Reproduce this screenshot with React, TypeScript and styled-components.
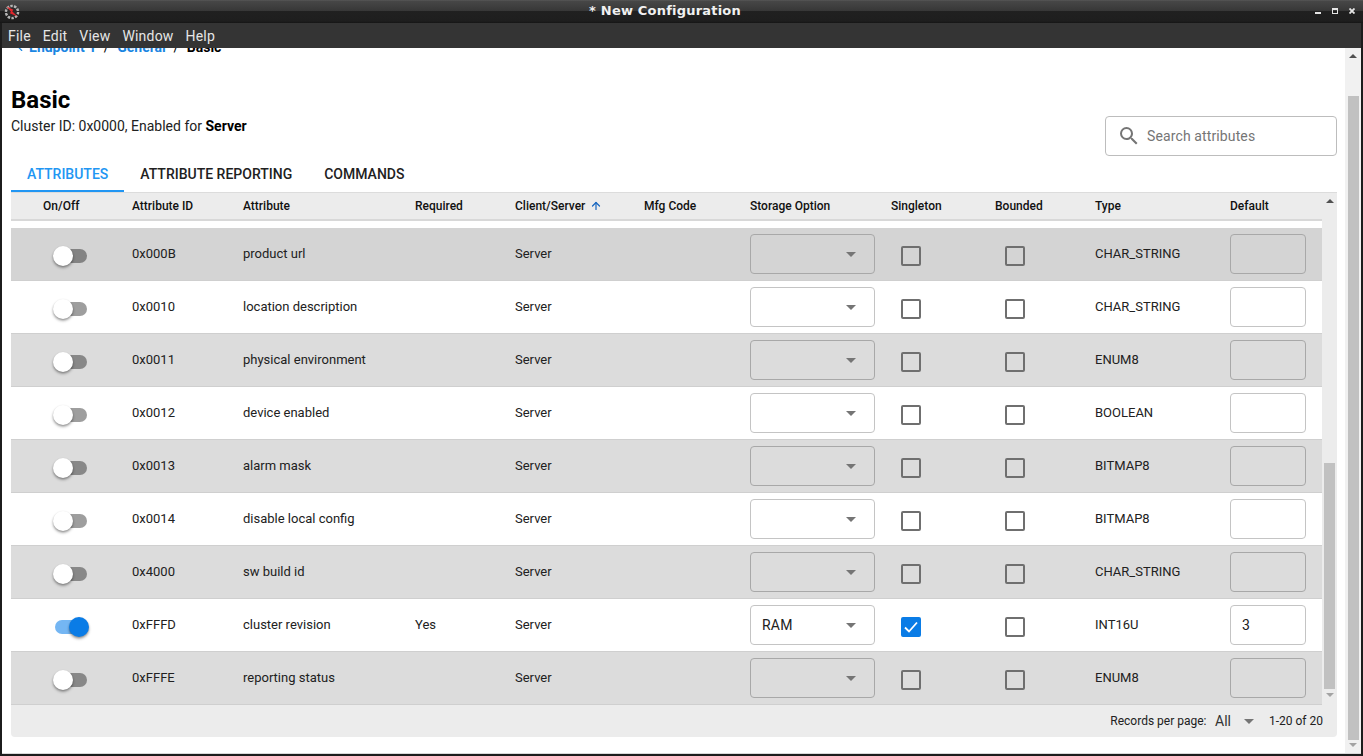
import React from "react";
import styled, { createGlobalStyle } from "styled-components";
import { ArrowUp, ChevronLeft } from "lucide-react";

const GlobalStyle = createGlobalStyle`
  html, body { margin: 0; height: 100%; overflow: hidden; background: #1c1c1c; }
  body { font-family: Roboto, "Liberation Sans", sans-serif; color: rgba(0, 0, 0, 0.87); }
  * { box-sizing: border-box; }
`;

const COLUMNS = "121px 111px 172px 100px 129px 106px 141px 104px 100px 135px 92px";

const Window = styled.div`
  width: 1363px;
  height: 756px;
  display: flex;
  flex-direction: column;
  overflow: hidden;
`;

const TitleBar = styled.div`
  height: 23px;
  flex: none;
  display: flex;
  align-items: center;
  justify-content: space-between;
  padding: 0 8px 0 3px;
  position: relative;
  background: linear-gradient(#5c5c5c 0, #474747 1px, #373737 11px, #202020 11px, #1e1e1e 21px, #151515 23px);
`;

const TitleText = styled.div`
  position: absolute;
  left: 0;
  right: 33px;
  top: 2px;
  text-align: center;
  font: bold 13px/17px "DejaVu Sans", sans-serif;
  letter-spacing: 0.2px;
  color: #f0f0f0;
`;

const WindowButtons = styled.div`
  display: flex;
  align-items: center;
  gap: 11px;
  color: #e4e4e4;
  margin-top: -1px;
`;

const MenuBar = styled.div`
  height: 25px;
  flex: none;
  margin-left: 2px;
  margin-right: 2px;
  padding-left: 6px;
  display: flex;
  align-items: center;
  gap: 12px;
  background: #343434;
`;

const MenuItem = styled.span`
  font-size: 14px;
  line-height: 20px;
  letter-spacing: 0.2px;
  color: #e6e6e6;
`;

const Frame = styled.div`
  flex: 1;
  min-height: 0;
  display: flex;
  margin: 0 2px 2px;
  background: #fff;
  border-bottom: 1px solid #d8d8d8;
  overflow: hidden;
`;

const Main = styled.main`
  flex: 1;
  min-width: 0;
  padding: 0 8px 0 9px;
`;

const Crumbs = styled.nav`
  height: 20px;
  margin-top: -11px;
  display: flex;
  align-items: center;
  font-size: 14px;
  font-weight: 700;
  color: #000;
`;

const CrumbLink = styled.a`
  color: #1a86e2;
`;

const CrumbSep = styled.span`
  width: 21px;
  text-align: center;
  font-weight: 400;
`;

const Head = styled.header`
  height: 72px;
  margin-top: 27px;
  display: flex;
  justify-content: space-between;
  align-items: flex-end;
`;

const TitleBlock = styled.div`
  align-self: flex-start;
`;

const Title = styled.h1`
  margin: 0;
  font-size: 24px;
  line-height: 32px;
  font-weight: 700;
  color: #000;
`;

const Subtitle = styled.div`
  font-size: 14px;
  line-height: 20px;
  color: #212121;
  b { font-weight: 700; color: #000; }
`;

const Search = styled.div`
  width: 232px;
  height: 40px;
  padding-left: 11px;
  display: flex;
  align-items: center;
  gap: 6px;
  border: 1px solid #bdbdbd;
  border-radius: 4px;
  font-size: 14px;
  letter-spacing: 0.12px;
  color: #757575;
`;

const Tabs = styled.div`
  height: 36px;
  display: flex;
`;

const Tab = styled.div<{ $active?: boolean }>`
  height: 36px;
  padding: 1px 16px 0;
  display: flex;
  align-items: center;
  font-size: 14px;
  font-weight: 500;
  text-transform: uppercase;
  color: ${(p) => (p.$active ? "#2196f3" : "#212121")};
  border-bottom: 2px solid ${(p) => (p.$active ? "#2196f3" : "transparent")};
`;

const Table = styled.section`
  display: flex;
  flex-direction: column;
  border-top: 1px solid #dcdcdc;
`;

const TableBody = styled.div`
  height: 512px;
  display: flex;
  background: #ececec;
`;

const TableLeft = styled.div`
  width: 1311px;
  flex: none;
`;

const HeaderRow = styled.div`
  height: 28px;
  display: grid;
  grid-template-columns: ${COLUMNS};
  align-items: center;
  border-bottom: 2px solid #d8d8d8;
  font-size: 12px;
  font-weight: 500;
  color: #111;
`;

const HeaderCell = styled.div<{ $center?: boolean }>`
  display: flex;
  align-items: center;
  gap: 5px;
  ${(p) => p.$center && "padding-left: 32px;"}
  color: #111;
`;

const Rows = styled.div`
  background: #fff;
  height: 484px;
  overflow: hidden;
`;

const ClippedRow = styled.div`
  height: 7px;
  background: #fff;
`;

const Row = styled.div<{ $bg: string }>`
  height: 53px;
  padding-bottom: 2px;
  display: grid;
  grid-template-columns: ${COLUMNS};
  align-items: center;
  font-size: 13px;
  color: #212121;
  background: ${(p) => p.$bg};
  border-bottom: 1px solid #cfcfcf;
`;

const SwitchBox = styled.div<{ $on: boolean }>`
  position: relative;
  width: 32px;
  height: 14px;
  margin: 6px 0 0 44px;
  border-radius: 7px;
  background: ${(p) => (p.$on ? "#74b6f3" : "rgba(0, 0, 0, 0.38)")};
  &::after {
    content: "";
    position: absolute;
    top: -3px;
    left: ${(p) => (p.$on ? "14px" : "-2px")};
    width: 20px;
    height: 20px;
    border-radius: 50%;
    background: ${(p) => (p.$on ? "#0a7ce6" : "#fff")};
    box-shadow: 0 2px 3px rgba(0, 0, 0, 0.3), 0 1px 2px rgba(0, 0, 0, 0.2);
  }
`;

const Field = styled.div<{ $width: number; $disabled: boolean }>`
  width: ${(p) => p.$width}px;
  height: 40px;
  margin-top: 2px;
  padding: 0 11px;
  display: flex;
  align-items: center;
  justify-content: space-between;
  border: 1px solid ${(p) => (p.$disabled ? "#a8a8a8" : "#c4c4c4")};
  border-radius: 4px;
  background: ${(p) => (p.$disabled ? "transparent" : "#fff")};
  font-size: 14px;
  letter-spacing: 0.2px;
  color: #212121;
`;

const Caret = styled.span`
  width: 0;
  height: 0;
  margin-right: 7px;
  border-left: 5px solid transparent;
  border-right: 5px solid transparent;
  border-top: 5px solid #757575;
`;

const Check = styled.div<{ $checked?: boolean }>`
  width: 20px;
  height: 20px;
  margin: 6px 0 0 10px;
  display: flex;
  align-items: center;
  justify-content: center;
  border-radius: 2px;
  border: 2px solid ${(p) => (p.$checked ? "#0a7ce6" : "#6f6f6f")};
  background: ${(p) => (p.$checked ? "#0a7ce6" : "transparent")};
`;

const Footer = styled.div`
  height: 32px;
  padding-right: 14px;
  display: flex;
  align-items: center;
  justify-content: flex-end;
  background: #ececec;
  border-radius: 0 0 4px 4px;
  font-size: 12px;
  color: #212121;
`;

const PageSize = styled.span`
  margin-left: 8.5px;
  font-size: 14px;
  color: #333;
`;

const FooterCaret = styled(Caret)`
  margin: 1px 0 0 13px;
`;

const PageCount = styled.span`
  margin-left: 15px;
`;

const ScrollBar = styled.div<{ $outer?: boolean }>`
  flex: none;
  width: ${(p) => (p.$outer ? 16 : 15)}px;
  display: flex;
  flex-direction: column;
  align-items: center;
  background: ${(p) => (p.$outer ? "#f1f1f1" : "#ececec")};
`;

const ScrollArrow = styled.span<{ $down?: boolean }>`
  flex: none;
  width: 0;
  height: 0;
  border-left: 4px solid transparent;
  border-right: 4px solid transparent;
  ${(p) =>
    p.$down ? "border-top: 4px solid #a3a3a3;" : "border-bottom: 4px solid #505050;"}
`;

const ScrollGap = styled.div<{ $size: number }>`
  flex: none;
  height: ${(p) => p.$size}px;
`;

const Thumb = styled.div<{ $size: number; $width: number }>`
  flex: none;
  width: ${(p) => p.$width}px;
  height: ${(p) => p.$size}px;
  background: #c1c1c1;
`;

type Attr = {
  id: string;
  name: string;
  type: string;
  required?: boolean;
  on?: boolean;
  storage?: string;
  value?: string;
};

const attrs: Attr[] = [
  { id: "0x000B", name: "product url", type: "CHAR_STRING" },
  { id: "0x0010", name: "location description", type: "CHAR_STRING" },
  { id: "0x0011", name: "physical environment", type: "ENUM8" },
  { id: "0x0012", name: "device enabled", type: "BOOLEAN" },
  { id: "0x0013", name: "alarm mask", type: "BITMAP8" },
  { id: "0x0014", name: "disable local config", type: "BITMAP8" },
  { id: "0x4000", name: "sw build id", type: "CHAR_STRING" },
  { id: "0xFFFD", name: "cluster revision", type: "INT16U", required: true, on: true, storage: "RAM", value: "3" },
  { id: "0xFFFE", name: "reporting status", type: "ENUM8" },
];

const columns = [
  "Attribute ID",
  "Attribute",
  "Required",
  "Client/Server",
  "Mfg Code",
  "Storage Option",
  "Singleton",
  "Bounded",
  "Type",
  "Default",
];

const rowColor = (i: number) => {
  if (i === 0) return "#d4d4d4";
  return i % 2 === 0 ? "#dcdcdc" : "#fff";
};

const AppIcon = () => (
  <svg width="18" height="18" viewBox="0 0 18 18">
    <circle cx="9" cy="9" r="6" fill="none" stroke="#b4b4b4" strokeWidth="2.6" strokeDasharray="2.4 1.3" />
    <circle cx="9" cy="9" r="4.6" fill="#2a2a2a" />
    <path d="M3.5 3.5 L10.5 6.8 L9.2 8.2 L14.5 13.5 L6.8 10.2 L8 8.8 Z" fill="#e2262c" />
  </svg>
);

const MinimizeIcon = () => (
  <svg width="6" height="6" viewBox="0 0 6 6">
    <rect y="4" width="6" height="2" fill="currentColor" />
  </svg>
);

const MaximizeIcon = () => (
  <svg width="6" height="6" viewBox="0 0 6 6">
    <path d="M0 0H6V6H0Z M1 2V5H5V2Z" fillRule="evenodd" fill="currentColor" />
  </svg>
);

const CloseIcon = () => (
  <svg width="6" height="6" viewBox="0 0 6 6">
    <path d="M0.5 0.5L5.5 5.5M5.5 0.5L0.5 5.5" stroke="currentColor" strokeWidth="1.8" />
  </svg>
);

const SearchIcon = () => (
  <svg width="24" height="24" viewBox="0 0 24 24">
    <path
      fill="#757575"
      d="M9.5,3A6.5,6.5 0 0,1 16,9.5C16,11.11 15.41,12.59 14.44,13.73L14.71,14H15.5L20.5,19L19,20.5L14,15.5V14.71L13.73,14.44C12.59,15.41 11.11,16 9.5,16A6.5,6.5 0 0,1 3,9.5A6.5,6.5 0 0,1 9.5,3M9.5,5C7,5 5,7 5,9.5C5,12 7,14 9.5,14C12,14 14,12 14,9.5C14,7 12,5 9.5,5Z"
    />
  </svg>
);

const CheckMark = () => (
  <svg width="16" height="16" viewBox="0 0 16 16">
    <path d="M2 8.5L6 12.5L14 3.5" fill="none" stroke="#fff" strokeWidth="1.8" />
  </svg>
);

export default function App() {
  return (
    <Window>
      <GlobalStyle />
      <TitleBar>
        <AppIcon />
        <TitleText>* New Configuration</TitleText>
        <WindowButtons>
          <MinimizeIcon />
          <MaximizeIcon />
          <CloseIcon />
        </WindowButtons>
      </TitleBar>
      <MenuBar>
        {["File", "Edit", "View", "Window", "Help"].map((m) => (
          <MenuItem key={m}>{m}</MenuItem>
        ))}
      </MenuBar>
      <Frame>
        <Main>
          <Crumbs>
            <CrumbLink>
              <ChevronLeft size={14} style={{ verticalAlign: -2, margin: "0 2px 0 2px" }} />
              Endpoint 1
            </CrumbLink>
            <CrumbSep>/</CrumbSep>
            <CrumbLink>General</CrumbLink>
            <CrumbSep>/</CrumbSep>
            <span>Basic</span>
          </Crumbs>
          <Head>
            <TitleBlock>
              <Title>Basic</Title>
              <Subtitle>
                Cluster ID: 0x0000, Enabled for <b>Server</b>
              </Subtitle>
            </TitleBlock>
            <Search>
              <SearchIcon />
              Search attributes
            </Search>
          </Head>
          <Tabs>
            <Tab $active>Attributes</Tab>
            <Tab>Attribute Reporting</Tab>
            <Tab>Commands</Tab>
          </Tabs>
          <Table>
            <TableBody>
              <TableLeft>
                <HeaderRow>
                  <HeaderCell $center>On/Off</HeaderCell>
                  {columns.map((c) => (
                    <HeaderCell key={c}>
                      {c}
                      {c === "Client/Server" && <ArrowUp size={12} color="#1565c0" strokeWidth={2.4} />}
                    </HeaderCell>
                  ))}
                </HeaderRow>
                <Rows>
                  <ClippedRow />
                  {attrs.map((a, i) => {
                    const disabled = i % 2 === 0;
                    return (
                      <Row key={a.id} $bg={rowColor(i)}>
                        <SwitchBox $on={!!a.on} />
                        <div>{a.id}</div>
                        <div>{a.name}</div>
                        <div>{a.required ? "Yes" : ""}</div>
                        <div>Server</div>
                        <div />
                        <Field $width={125} $disabled={disabled}>
                          <span>{a.storage}</span>
                          <Caret />
                        </Field>
                        <Check $checked={a.on}>{a.on && <CheckMark />}</Check>
                        <Check />
                        <div>{a.type}</div>
                        <Field $width={76} $disabled={disabled}>
                          {a.value}
                        </Field>
                      </Row>
                    );
                  })}
                </Rows>
              </TableLeft>
              <ScrollBar>
                <ScrollGap $size={6} />
                <ScrollArrow />
                <ScrollGap $size={260} />
                <Thumb $size={226} $width={11} />
                <ScrollGap $size={4} />
                <ScrollArrow $down />
              </ScrollBar>
            </TableBody>
            <Footer>
              Records per page:
              <PageSize>All</PageSize>
              <FooterCaret />
              <PageCount>1-20 of 20</PageCount>
            </Footer>
          </Table>
        </Main>
        <ScrollBar $outer>
          <ScrollGap $size={6} />
          <ScrollArrow />
          <ScrollGap $size={38} />
          <Thumb $size={644} $width={11} />
          <ScrollGap $size={3} />
          <ScrollArrow $down />
        </ScrollBar>
      </Frame>
    </Window>
  );
}
